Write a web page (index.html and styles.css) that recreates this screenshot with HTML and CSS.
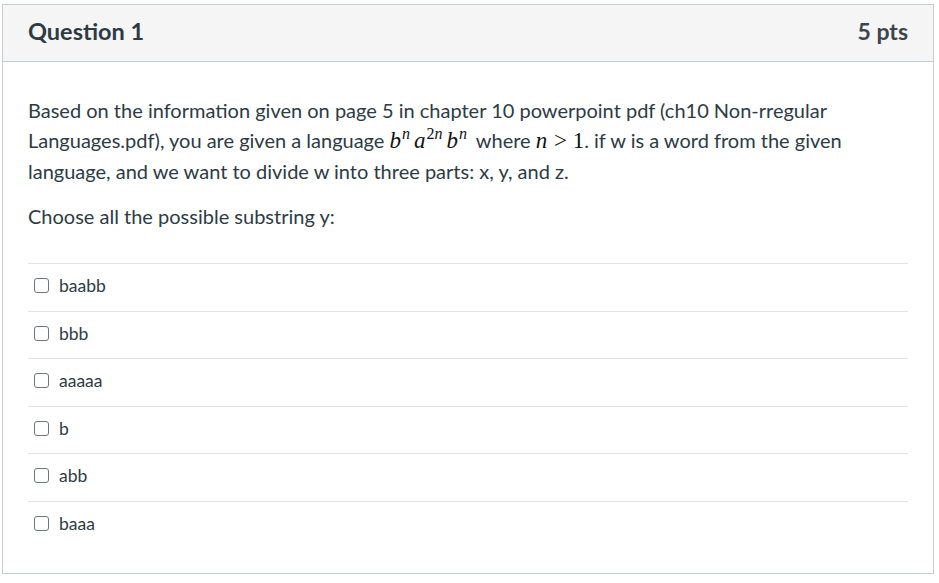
FILE: index.html
```html
<!DOCTYPE html>
<html>
<head>
<meta charset="utf-8">
<link rel="stylesheet" href="styles.css">
</head>
<body>
<div class="question">
  <div class="header">
    <h2 class="title">Question 1</h2>
    <span class="pts">5 pts</span>
  </div>
  <div class="content">
    <p class="text">Based on the information given on page 5 in chapter 10 powerpoint pdf (ch10 Non-rregular Languages.pdf), you are given a language <span class="math"><i>b</i><sup><i>n</i></sup><i>a</i><sup>2<i>n</i></sup><i>b</i><sup><i>n</i></sup></span> where <span class="math"><i>n</i> &gt; 1</span>. if w is a word from the given language, and we want to divide w into three parts: x, y, and z.</p>
    <p class="text">Choose all the possible substring y:</p>
    <div class="answers">
      <label class="answer"><span class="box"></span><span>baabb</span></label>
      <label class="answer"><span class="box"></span><span>bbb</span></label>
      <label class="answer"><span class="box"></span><span>aaaaa</span></label>
      <label class="answer"><span class="box"></span><span>b</span></label>
      <label class="answer"><span class="box"></span><span>abb</span></label>
      <label class="answer"><span class="box"></span><span>baaa</span></label>
    </div>
  </div>
</div>
</body>
</html>
```
FILE: styles.css
```css
html, body {
  margin: 0;
  padding: 0;
  background: #fff;
}
body {
  padding: 4px 5px 0 2px;
  font-family: Lato, "Liberation Sans", sans-serif;
  color: #2d3b45;
}
.question {
  border: 1px solid #c7cdd1;
  height: 570px;
  box-sizing: border-box;
}
.header {
  display: flex;
  justify-content: space-between;
  align-items: center;
  height: 57px;
  box-sizing: border-box;
  background: #f5f5f5;
  border-bottom: 1px solid #c7cdd1;
  padding: 0 25px 4px 25px;
}
.title {
  margin: 0;
  font-size: 23.5px;
  font-weight: 700;
}
.pts {
  font-size: 23px;
  font-weight: 700;
  color: #3d454c;
}
.content {
  padding: 33px 25px 0 25px;
}
.text {
  margin: 0 0 15px 0;
  font-size: 20px;
  line-height: 30px;
}
.math {
  font-family: "Liberation Serif", "DejaVu Serif", serif;
  font-size: 23px;
  color: #111;
}
.math i {
  padding-right: 1px;
}
.math sup {
  font-size: 16px;
  line-height: 0;
  vertical-align: 9px;
  margin-right: 3px;
}
.answers {
  margin-top: 32px;
}
.answer {
  display: flex;
  align-items: center;
  gap: 10px;
  height: 47.5px;
  box-sizing: border-box;
  border-top: 1px solid #dfe2e4;
  padding: 0 0 3px 6px;
  font-size: 17.5px;
}
.box {
  width: 15px;
  height: 15px;
  border: 1px solid #6b7780;
  border-radius: 3px;
  background: #fff;
  box-sizing: border-box;
}
```
